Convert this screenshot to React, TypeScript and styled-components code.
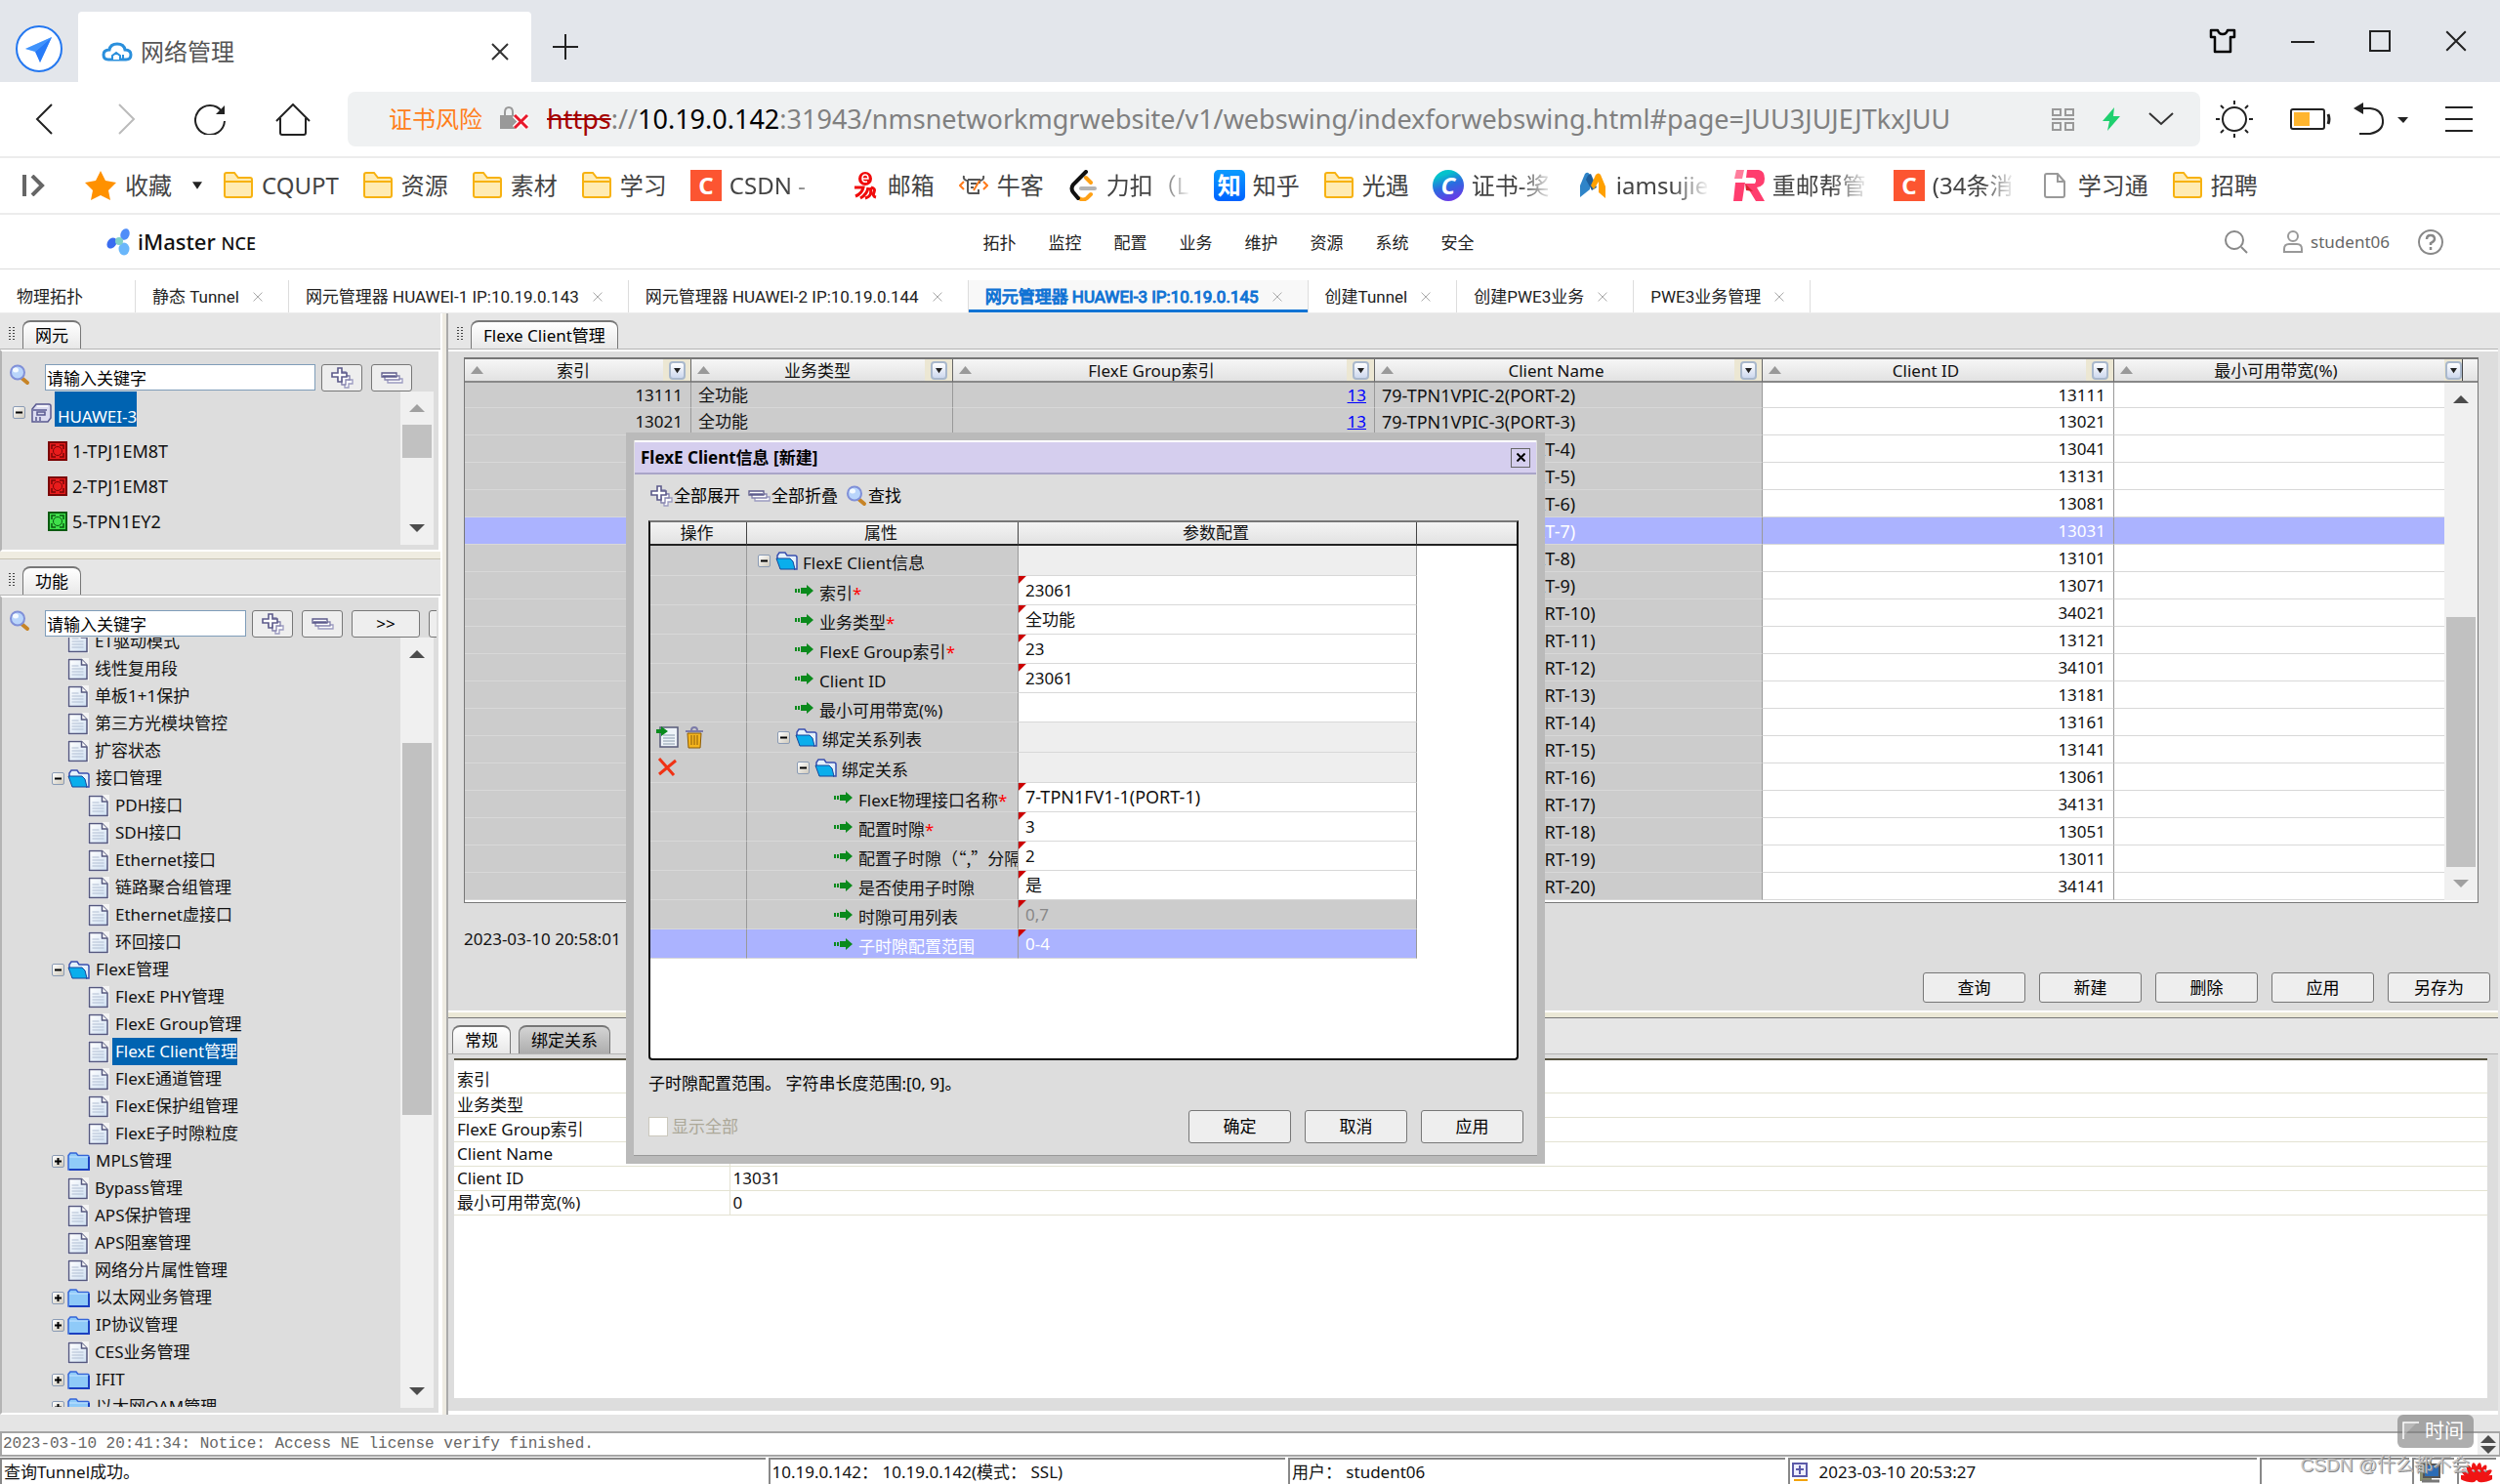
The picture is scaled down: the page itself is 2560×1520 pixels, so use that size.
import React from "react";
import styled, { createGlobalStyle, css } from "styled-components";

const Global = createGlobalStyle`
  *, *::before, *::after { box-sizing: border-box; }
  body { margin: 0; background: #fff; }
  body, button, input { font-family: "Noto Sans", "Noto Sans CJK SC", sans-serif; }
  button { padding: 0; border: 0; background: none; color: inherit; font-size: inherit; line-height: inherit; }
  svg { display: block; flex: none; }
`;

const Page = styled.div`
  position: relative;
  min-height: 100vh;
  display: flex;
  flex-direction: column;
  font-size: 17px;
  line-height: 24px;
  color: #111;
  overflow: hidden;
`;

/* ---------- browser chrome ---------- */

const TitleBar = styled.header`
  height: 84px;
  background: #e3e6eb;
  display: flex;
  align-items: stretch;
  padding: 12px 34px 0 16px;
`;
const Compass = styled.div`
  width: 64px;
  padding-top: 14px;
`;
const BrowserTab = styled.div`
  width: 464px;
  background: #fff;
  border-radius: 4px 4px 0 0;
  display: flex;
  align-items: center;
  gap: 8px;
  padding: 10px 23px 0 24px;
  font-size: 24px;
  color: #555;
`;
const Grow = styled.div`
  flex: 1;
`;
const PlainButton = styled.button`
  display: flex;
  align-items: center;
  justify-content: center;
`;
const NewTab = styled(PlainButton)`
  width: 70px;
`;
const WindowButtons = styled.div`
  display: flex;
  align-items: center;
  gap: 56px;
  height: 60px;
`;

const AddressBar = styled.div`
  height: 78px;
  border-bottom: 2px solid #ececec;
  display: flex;
  align-items: center;
  padding: 0 28px 0 2px;
`;
const NavButtons = styled.div`
  display: grid;
  grid-template-columns: repeat(4, 85px);
  width: 354px;
`;
const Omnibox = styled.div`
  flex: 1;
  min-width: 0;
  height: 56px;
  border-radius: 8px;
  background: #eff1f2;
  display: flex;
  align-items: center;
  padding: 0 27px 0 42px;
`;
const Risk = styled.span`
  font-size: 24px;
  color: #ff7e1a;
  margin-right: 18px;
`;
const Url = styled.div`
  flex: 1;
  min-width: 0;
  overflow: hidden;
  white-space: nowrap;
  font-size: 27px;
  line-height: 40px;
  color: #808080;
  margin: 0 32px 0 18px;
`;
const Scheme = styled.span`
  color: #a40000;
  text-decoration: line-through;
  text-decoration-thickness: 2px;
`;
const Host = styled.span`
  color: #000;
`;
const OmniboxTools = styled.div`
  display: flex;
  align-items: center;
  gap: 28px;
`;
const BrowserTools = styled.div`
  display: flex;
  align-items: center;
  gap: 38px;
  padding-left: 16px;
`;
const ToolPair = styled.div`
  display: flex;
  align-items: center;
  gap: 23px;
`;

const Bookmarks = styled.nav`
  height: 58px;
  border-bottom: 2px solid #ececec;
  display: flex;
  align-items: center;
  gap: 24px;
  padding-left: 22px;
  font-size: 24px;
  line-height: 32px;
  color: #444;
  white-space: nowrap;
`;
const BookmarkLead = styled.div`
  display: flex;
  align-items: center;
  width: 182px;
`;
const Rule = styled.i`
  width: 1px;
  height: 20px;
  background: #ccc;
  margin: 0 21px 0 19px;
`;
const LeadText = styled.span`
  margin: 0 21px 0 9px;
`;
const Bookmark = styled.a<{ $clip?: number }>`
  display: flex;
  align-items: center;
  gap: 8px;
  color: inherit;
  text-decoration: none;
  > span {
    ${(p) =>
      p.$clip
        ? css`
            width: ${p.$clip}px;
            mask-image: linear-gradient(to right, #000 60%, transparent 100%);
          `
        : css`
            min-width: 48px;
          `}
  }
`;
const IconSlot = styled.i`
  width: 32px;
  height: 32px;
  display: flex;
  align-items: center;
  justify-content: center;
  font-style: normal;
`;
const Tile = styled(IconSlot)<{ $bg: string; $r: number }>`
  background: ${(p) => p.$bg};
  border-radius: ${(p) => p.$r}px;
  color: #fff;
  font-weight: 700;
  font-size: 24px;
`;

/* ---------- product header ---------- */

const ProductBar = styled.header`
  height: 56px;
  border-bottom: 1px solid #ddd;
  display: grid;
  grid-template-columns: 40% auto 1fr;
  align-items: center;
  padding-right: 46px;
  color: #222;
`;
const Brand = styled.div`
  display: flex;
  align-items: center;
  gap: 7px;
  padding-left: 109px;
  font-size: 22px;
  font-weight: 500;
  color: #111;
`;
const BrandSmall = styled.span`
  font-size: 18px;
`;
const Menu = styled.nav`
  display: flex;
  gap: 33px;
  padding: 2px 0 0 1px;
`;
const MenuLink = styled.a`
  color: inherit;
  text-decoration: none;
`;
const Account = styled.div`
  display: flex;
  align-items: center;
  justify-content: flex-end;
  padding-right: 12px;
  color: #666;
`;
const UserName = styled.span`
  margin: 0 29px 0 8px;
`;
const UserIconWrap = styled.span`
  margin-left: 36px;
`;

const PageTabs = styled.div`
  height: 45px;
  padding-top: 11px;
  display: flex;
  font-family: Roboto, "Noto Sans CJK SC", sans-serif;
  border-bottom: 1px solid #ececec;
`;
const PageTab = styled.div<{ $active?: boolean; $plain?: boolean }>`
  display: flex;
  align-items: center;
  gap: 14px;
  padding: 0 ${(p) => (p.$plain ? 53 : 26)}px 0 17px;
  border-right: 1px solid #ddd;
  white-space: nowrap;
  color: #222;
  ${(p) =>
    p.$active &&
    css`
      color: #1173d4;
      background: #f8f8f8;
      box-shadow: inset 0 -3px #1173d4;
      -webkit-text-stroke: 1px #1173d4;
    `}
`;

/* ---------- workspace ---------- */

const Workspace = styled.main`
  flex: 1;
  display: grid;
  grid-template-columns: 451px 8px minmax(0, 1fr);
  background: #e6e6e6;
  padding-right: 2px;
`;
const Column = styled.div`
  display: flex;
  flex-direction: column;
  min-width: 0;
`;
const ColumnSplit = styled.div`
  background: #eeebe2;
  border-left: 2px solid #fff;
  border-right: 2px solid #aaa;
`;
const RowSplit = styled.div`
  height: 8px;
  background: #efece1;
  border-bottom: 1px solid #c8c3b4;
`;
const Panel = styled.section<{ $fill?: boolean }>`
  display: flex;
  flex-direction: column;
  ${(p) => p.$fill && "flex: 1; min-height: 0;"}
`;
const TabStrip = styled.div<{ $left?: number }>`
  height: 37px;
  border-bottom: 1px solid #b4b4b4;
  display: flex;
  align-items: flex-end;
  gap: 8px;
  padding-left: ${(p) => p.$left ?? 8}px;
`;
const Grip = styled.i`
  width: 7px;
  height: 14px;
  margin-bottom: 9px;
  background: radial-gradient(circle, #444 1px, transparent 1px) 0 0 / 4px 3px;
`;
const SwingTab = styled.button<{ $dim?: boolean }>`
  height: 29px;
  padding: 0 12px;
  border: 1px solid #777;
  border-top-width: 2px;
  border-bottom: 0;
  border-radius: 8px 8px 0 0;
  color: #000;
  background: ${(p) => (p.$dim ? "linear-gradient(#d4d4d4, #adadad)" : "linear-gradient(#fff, #e8e8e8)")};
`;
const PanelBody = styled.div<{ $h?: number }>`
  ${(p) => (p.$h ? `height: ${p.$h}px;` : "flex: 1; min-height: 0;")}
  background: #ddd;
  border: 2px solid #fff;
  border-left-color: #b4b4b4;
  display: flex;
  flex-direction: column;
  padding: 13px 2px 5px 0;
  overflow: hidden;
`;
const SearchRow = styled.div`
  display: flex;
  align-items: flex-start;
  gap: 9px;
  height: 28px;
  padding-left: 7px;
  overflow: hidden;
`;
const Lens = styled.label`
  width: 28px;
`;
const SearchInput = styled.input`
  flex: 1;
  min-width: 0;
  height: 27px;
  padding: 0 1px;
  border: 1px solid #7f9db9;
  background: #fff;
  font-size: 17px;
  color: #000;
  margin-right: -3px;
`;
const ToolButton = styled.button<{ $w?: number }>`
  width: ${(p) => p.$w ?? 42}px;
  flex: none;
  height: 28px;
  border: 1px solid #777;
  border-radius: 3px;
  background: #eee;
  color: #000;
  display: flex;
  align-items: center;
  justify-content: center;
`;
const EndCap = styled.div<{ $w: number }>`
  flex: none;
  width: ${(p) => p.$w}px;
  overflow: hidden;
`;
const TreeArea = styled.div`
  flex: 1;
  min-height: 0;
  display: flex;
  overflow: hidden;
  padding-right: 3px;
`;
const BoardTree = styled.ul`
  flex: 1;
  margin: 0;
  padding: 0;
  list-style: none;
  font-size: 18px;
  li {
    display: flex;
    align-items: center;
    gap: 5px;
    height: 36px;
    padding-left: 47px;
  }
  li:first-child {
    gap: 6px;
    padding-left: 11px;
    height: 43px;
    font-size: 17px;
  }
`;
const RootLabel = styled.span`
  align-self: flex-start;
  height: 36px;
  padding: 15px 0 0 3px;
  line-height: 21px;
  background: #0063b1;
  color: #fff;
  margin-left: -3px;
`;
const FnViewport = styled.div`
  flex: 1;
  height: 788px;
  overflow: hidden;
`;
const FnTree = styled.ul`
  margin: -10px 0 0;
  padding: 0;
  list-style: none;
`;
const FnItem = styled.li<{ $kind: string }>`
  display: flex;
  align-items: center;
  height: 28px;
  gap: 3px;
  padding-left: ${(p) => (p.$kind === "leaf" ? 67 : p.$kind === "sub" ? 88 : 51)}px;
  white-space: nowrap;
`;
const FnLabel = styled.span<{ $on?: boolean }>`
  line-height: 28px;
  padding: 0 0 0 3px;
  ${(p) => p.$on && "background: #0063b1; color: #fff;"}
`;
const ExpandBox = styled.i`
  flex: none;
  width: 13px;
  height: 13px;
  border: 1px solid #8a9bb5;
  border-radius: 2px;
  background: linear-gradient(135deg, #fff, #cfc9bb);
  display: flex;
  align-items: center;
  justify-content: center;
`;

const Track = styled.div`
  flex: none;
  width: 34px;
  height: 100%;
  background: #f0f0f0;
  display: flex;
  flex-direction: column;
`;
const TrackEnd = styled(PlainButton)`
  flex: none;
  height: 34px;
  width: 100%;
`;
const Thumb = styled.div<{ $size: number }>`
  flex: ${(p) => p.$size};
  margin: 0 2px;
  background: #c1c1c1;
`;
const Space = styled.div<{ $size: number }>`
  flex: ${(p) => p.$size};
`;

/* ---------- main grid ---------- */

const ClientBody = styled.div`
  background: #ddd;
  border-top: 2px solid #fff;
  padding: 6px 20px 0 16px;
`;
const GridFrame = styled.div`
  border: 1px solid #777;
  border-top-width: 2px;
  background: #fff;
  padding-bottom: 2px;
`;
const ClientTable = styled.table`
  width: 100%;
  table-layout: fixed;
  border-collapse: separate;
  border-spacing: 0;
`;
const HeadCell = styled.th<{ $w?: number }>`
  ${(p) => p.$w && `width: ${p.$w}px;`}
  padding: 0;
  height: 24px;
  font-weight: 400;
  background: linear-gradient(#f6f6f6, #e2e2e2);
  border-right: 1px solid #666;
  border-bottom: 2px solid #888;
  &.open { border-right: 0; }
`;
const HeadInner = styled.div`
  display: flex;
  align-items: center;
  height: 22px;
`;
const HeadLabel = styled.span<{ $lead: number }>`
  flex: 1;
  text-align: center;
  padding: 2px ${(p) => p.$lead}px 0 0;
`;
const SortMark = styled.i`
  width: 13px;
  height: 8px;
  margin-left: 6px;
  background: #999;
  clip-path: polygon(50% 0, 100% 100%, 0 100%);
`;
const FilterCell = styled.i`
  display: flex;
  align-items: center;
  justify-content: center;
  width: 28px;
  height: 22px;
  background: #ece7d3;
`;
const LastFilter = styled(FilterCell)`
  width: 19px;
  border-right: 1px solid #444;
`;
const FilterButton = styled.button`
  width: 17px;
  height: 19px;
  border: 2px solid #a9b8cc;
  border-radius: 4px;
  background: linear-gradient(#fff, #cdd8ee);
  display: flex;
  align-items: center;
  justify-content: center;
`;
const ClientRow = styled.tr<{ $on?: boolean }>`
  height: 28px;
  &:first-child { height: 26px; }
  ${(p) => p.$on && "color: #fff;"}
  td { ${(p) => p.$on && "background: #abb3ff;"} }
`;
const Cell = styled.td<{ $ro?: boolean; $right?: boolean; $port?: boolean }>`
  padding: 0 8px 0 7px;
  line-height: 24px;
  font-size: ${(p) => (p.$port ? 18 : 17)}px;
  white-space: nowrap;
  border-right: 1px solid #999;
  border-bottom: 1px solid #d8d8d8;
  background: ${(p) => (p.$ro ? "#ccc" : "#fff")};
  text-align: ${(p) => (p.$right ? "right" : "left")};
  &.last { border-right: 0; }
`;
const TrackCell = styled.td`
  padding: 0;
  height: 1px;
`;
const GroupLink = styled.a`
  color: #00f;
`;
const Stamp = styled.div`
  padding-top: 25px;
`;
const Actions = styled.div`
  display: flex;
  justify-content: flex-end;
  gap: 14px;
  margin-right: -12px;
  padding: 22px 0 8px;
`;
const SwingButton = styled.button<{ $h?: number }>`
  width: 105px;
  height: ${(p) => p.$h ?? 31}px;
  border: 1px solid #777;
  border-radius: 3px;
  background: #eee;
  color: #000;
`;
const DetailSplit = styled.div`
  height: 8px;
  background: #ebe8d6;
  border-top: 2px solid #fff;
  border-bottom: 1px solid #777;
`;
const DetailBody = styled.div`
  flex: 1;
  background: #ddd;
  padding: 4px 11px 13px 6px;
  border-bottom: 4px solid #fff;
  display: flex;
`;
const DetailPane = styled.div`
  flex: 1;
  background: #fff;
  border-top: 2px solid #55513f;
  padding-top: 8px;
`;
const DetailTable = styled.table`
  width: 100%;
  border-collapse: collapse;
  th, td {
    padding: 0 3px;
    height: 25px;
    line-height: 24px;
    text-align: left;
    font-weight: 400;
    border-bottom: 1px solid #e3e2d2;
  }
  th { width: 282px; border-right: 1px solid #e3e2d2; }
`;

/* ---------- footer ---------- */

const Gutter = styled.div`
  height: 17px;
  background: #e5e5e5;
`;
const LogLine = styled.div`
  height: 26px;
  border: 2px solid #a5a5a5;
  border-right-width: 1px;
  background: #fff;
  display: flex;
  justify-content: space-between;
  align-items: center;
  padding: 0 0 0 1px;
  font-family: "Liberation Mono", monospace;
  font-size: 16px;
  color: #666;
`;
const Spinner = styled.div`
  width: 22px;
  height: 22px;
  background: #eee;
  display: grid;
  place-content: center;
  gap: 3px;
`;
const StatusBar = styled.footer`
  height: 28px;
  padding: 1px 4px 0 0;
  display: flex;
  gap: 3px;
`;
const StatusCell = styled.div<{ $grow: number }>`
  flex: ${(p) => p.$grow} 1 0;
  min-width: 0;
  border-top: 2px solid #888;
  border-left: 2px solid #888;
  padding-left: 2px;
  line-height: 24px;
  white-space: nowrap;
  display: flex;
  align-items: center;
  gap: 10px;
`;
const TimeBadge = styled.div`
  position: absolute;
  right: 27px;
  bottom: 37px;
  width: 78px;
  height: 34px;
  border-radius: 6px;
  background: rgba(120, 120, 120, 0.6);
  color: #fff;
  font-size: 20px;
  display: flex;
  align-items: center;
  gap: 5px;
  padding-left: 5px;
`;
const Watermark = styled.div`
  position: absolute;
  right: 12px;
  bottom: 5px;
  font-size: 19px;
  line-height: 28px;
  color: rgba(200, 200, 200, 0.95);
  text-shadow: 1px 1px #888;
  white-space: nowrap;
  font-family: "Liberation Sans", "Noto Sans CJK SC", sans-serif;
`;

/* ---------- dialog ---------- */

const Dialog = styled.section`
  position: absolute;
  left: 641px;
  top: 443px;
  width: 941px;
  background: #ddd;
  border: 8px solid #bababa;
`;
const DialogTitle = styled.div`
  height: 35px;
  display: flex;
  align-items: center;
  justify-content: space-between;
  padding: 0 6px;
  margin: 0 1px;
  border-top: 2px solid #fff;
  border-bottom: 2px solid #a9a4c8;
  background: #d5ceee;
  font-weight: 700;
  color: #000;
`;
const CloseBox = styled(PlainButton)`
  width: 20px;
  height: 20px;
  border: 1px solid #666;
`;
const DialogTools = styled.div`
  display: flex;
  align-items: center;
  gap: 8px;
  padding: 10px 0 13px 17px;
`;
const DialogTool = styled.button`
  display: flex;
  align-items: center;
  gap: 1px;
  color: #000;
`;
const PropFrame = styled.div`
  margin: 0 19px 0 15px;
  min-height: 553px;
  border: 2px solid #111;
  border-top-color: #777;
  border-radius: 0 0 4px 4px;
  background: #fff;
`;
const PropTable = styled.table`
  width: 100%;
  table-layout: fixed;
  border-collapse: separate;
  border-spacing: 0;
`;
const PropHead = styled.th<{ $w?: number }>`
  ${(p) => p.$w && `width: ${p.$w}px;`}
  height: 24px;
  padding: 0 3px 0 0;
  line-height: 22px;
  font-weight: 400;
  background: linear-gradient(#f4f4f4, #e2e2e2);
  border-right: 1px solid #444;
  border-bottom: 2px solid #222;
  &:last-child { border-right: 0; }
`;
const PropRow = styled.tr<{ $tall?: boolean; $on?: boolean }>`
  height: ${(p) => (p.$tall ? 31 : 30)}px;
  td {
    padding: 0;
    background: #ccc;
    border-right: 1px solid #999;
    border-bottom: 1px solid #d8d8d8;
  }
  td:last-child { background: #fff; border: 0; }
  ${(p) => p.$on && "color: #fff; && td:not(:last-child) { background: #abb3ff; }"}
`;
const PropName = styled.div<{ $pad: number }>`
  display: flex;
  align-items: center;
  gap: 5px;
  height: 28px;
  padding-left: ${(p) => p.$pad}px;
  overflow: hidden;
  white-space: nowrap;
  > span { padding-top: 6px; }
`;
const WideQuote = styled.span`
  font-family: "Noto Sans CJK SC", sans-serif;
`;
const Star = styled.b`
  color: #f00;
  font-weight: 400;
`;
const PropValue = styled.td<{ $bg: string }>`
  && {
    background: ${(p) => (p.$bg === "edit" ? "#fff" : p.$bg === "group" ? "#eee" : "#ccc")};
  }
`;
const ValueText = styled.div<{ $gray?: boolean; $mark?: boolean; $port?: boolean }>`
  height: 29px;
  padding-left: 7px;
  line-height: 29px;
  font-size: ${(p) => (p.$port ? 18 : 17)}px;
  ${(p) => p.$gray && "color: #888;"}
  ${(p) => p.$mark && "background: linear-gradient(135deg, #c00 5px, transparent 6px) no-repeat;"}
`;
const OpIcons = styled.div`
  display: flex;
  gap: 5px;
  padding-left: 6px;
`;
const Hint = styled.p`
  margin: 0;
  padding: 12px 15px 0;
  color: #000;
`;
const DialogFoot = styled.div`
  display: flex;
  align-items: center;
  gap: 14px;
  padding: 15px 14px 12px 15px;
  border-bottom: 1px solid #999;
`;
const ShowAll = styled.label`
  flex: 1;
  display: flex;
  align-items: center;
  gap: 4px;
  color: #aca899;
`;
const CheckBox = styled.input`
  appearance: none;
  width: 20px;
  height: 20px;
  margin: 0;
  border: 1px solid #cbc8bd;
  background: #fff;
`;

/* ---------- drawings ---------- */

const Cross = ({ s = 18, c = "#333", w = 2 }: { s?: number; c?: string; w?: number }) => (
  <svg width={s} height={s} viewBox="0 0 18 18" stroke={c} strokeWidth={(w * 18) / s}>
    <path d="M1 1L17 17M17 1L1 17" />
  </svg>
);
const FolderYellow = () => (
  <svg width="30" height="28" viewBox="0 0 30 28" fill="#ffebb3" stroke="#f7b211" strokeWidth="2">
    <path d="M1 3q0-2 2-2h8l4 5h12q2 0 2 2v16q0 2-2 2H3q-2 0-2-2z" />
    <path d="M1 10h28" />
  </svg>
);
const DocIcon = () => (
  <svg width="22" height="23" viewBox="0 0 22 23">
    <defs>
      <linearGradient id="sheet" x1="0" y1="0" x2="1" y2="1">
        <stop offset="0" stopColor="#fff" />
        <stop offset="1" stopColor="#cfe0f2" />
      </linearGradient>
    </defs>
    <rect width="22" height="23" fill="#f4f4f4" />
    <path d="M1.500 1.500h13l5.500 5.500v14.500h-18.500z" fill="url(#sheet)" stroke="#55587f" strokeWidth="1.500" />
    <path d="M14.500 1.500v5.500h5.500" fill="#fff" stroke="#55587f" strokeWidth="1.500" />
    <path d="M4.500 8h7M4.500 11h12M4.500 14h12M4.500 17h12" stroke="#b0bdd2" />
  </svg>
);
const FolderClosed = () => (
  <svg width="23" height="19" viewBox="0 0 23 19">
    <path d="M1 3.500l2-2.500h6l2 2.500h10q1 0 1 1V18H1z" fill="#8fcaf8" stroke="#3465d8" strokeWidth="1.500" />
    <path d="M2 5h19" stroke="#c5e5ff" />
    <path d="M22 5v13H2" fill="none" stroke="#1b40c0" strokeWidth="2" />
  </svg>
);
const FolderOpen = () => (
  <svg width="23" height="19" viewBox="0 0 23 19">
    <path d="M2 8V4l2-3h6l2 3h8q2 0 2 2v12h-3" fill="#e4f1fb" stroke="#3a4fae" strokeWidth="1.500" />
    <path d="M1 7h14l3 3 2 8H5z" fill="#0aaeec" stroke="#17479a" />
  </svg>
);
const Expander = ({ plus }: { plus?: boolean }) => (
  <ExpandBox>
    <svg width="9" height="9" viewBox="0 0 9 9" stroke="#000" strokeWidth="2">
      <path d={plus ? "M1 4.500h7M4.500 1v7" : "M1 4.500h7"} />
    </svg>
  </ExpandBox>
);
const PlusStack = () => (
  <svg width="23" height="22" viewBox="0 0 23 22" fill="#fff" stroke="#5c5a8a" strokeWidth="1.300">
    <path d="M14 9h4v4h4v4h-4v4h-4v-4h-3v-4h3z" stroke="#9b9ac0" />
    <path d="M11 5h4v4h4v4h-4v5h-4v-5H7V9h4z" stroke="#8583ad" />
    <path d="M7 1h4v5h5v4h-5v5H7v-5H1V6h6z" strokeWidth="1.600" />
  </svg>
);
const MinusStack = () => (
  <svg width="23" height="13" viewBox="0 0 23 13" fill="#fff" stroke="#5c5a8a" strokeWidth="1.300">
    <path d="M7 7h15v4H7z" stroke="#9b9ac0" />
    <path d="M4 4h15v4H4z" stroke="#8583ad" />
    <path d="M1 1h15v4H1z" />
    <path d="M2 4h13" stroke="#4a4880" />
  </svg>
);
const SearchGlass = () => (
  <svg width="22" height="22" viewBox="0 0 22 22">
    <path d="M13 14l6 5" stroke="#c78426" strokeWidth="4" strokeLinecap="round" />
    <circle cx="9" cy="8.500" r="7" fill="#b9d5fb" stroke="#8090d8" strokeWidth="2" />
    <ellipse cx="7" cy="6" rx="3" ry="2.500" fill="#f4faff" />
  </svg>
);
const Board = ({ c, d }: { c: string; d: string }) => (
  <svg width="20" height="20" viewBox="0 0 20 20">
    <rect x="1" y="1" width="18" height="18" fill={c} stroke={d} strokeWidth="2" />
    <path d="M4 8V4h4M12 4h4v4M16 12v4h-4M8 16H4v-4" fill="none" stroke={d} strokeWidth="1.500" />
    <circle cx="10" cy="10" r="4.500" fill={c} stroke={d} />
  </svg>
);
const Device = () => (
  <svg width="21" height="20" viewBox="0 0 21 20" stroke="#5a5a90" strokeWidth="1.500" fill="#dcdcf0">
    <path d="M1 6l4-5h13q2 0 2 2v12l-3 4H1z" />
    <path d="M2 7h14M6 9h8v3H6zM5 14v4M9 14v4" />
    <path d="M6 3h11" stroke="#fff" />
  </svg>
);
const Arrow = ({ c = "#4c4c4c", up }: { c?: string; up?: boolean }) => (
  <svg width="16" height="8" viewBox="0 0 16 8" fill={c}>
    <path d={up ? "M8 0l8 8H0z" : "M0 0h16l-8 8z"} />
  </svg>
);
const Green = () => (
  <svg width="20" height="14" viewBox="0 0 20 14" fill="#0a8a1c">
    <path d="M0 5h2v4H0zM3 5h2v4H3zM6 4h6V1l7 6-7 6v-3H6z" />
  </svg>
);
const Caret = ({ s = 7 }: { s?: number }) => (
  <svg width={s} height={s} viewBox="0 0 8 8" fill="#222">
    <path d="M0 1h8L4 7z" />
  </svg>
);

const Scroll = ({ before, size, after, upOff, downOff }: { before: number; size: number; after: number; upOff?: boolean; downOff?: boolean }) => (
  <Track>
    <TrackEnd aria-label="向上滚动"><Arrow up c={upOff ? "#a0a0a0" : undefined} /></TrackEnd>
    <Space $size={before} />
    <Thumb $size={size} />
    <Space $size={after} />
    <TrackEnd aria-label="向下滚动"><Arrow c={downOff ? "#a0a0a0" : undefined} /></TrackEnd>
  </Track>
);

/* ---------- data ---------- */

const pageTabs = [
  "物理拓扑",
  "静态 Tunnel",
  "网元管理器 HUAWEI-1 IP:10.19.0.143",
  "网元管理器 HUAWEI-2 IP:10.19.0.144",
  "网元管理器 HUAWEI-3 IP:10.19.0.145",
  "创建Tunnel",
  "创建PWE3业务",
  "PWE3业务管理",
];

const fnItems: [string, string][] = [
  ["leaf", "ET驱动模式"], ["leaf", "线性复用段"], ["leaf", "单板1+1保护"], ["leaf", "第三方光模块管控"], ["leaf", "扩容状态"],
  ["open", "接口管理"], ["sub", "PDH接口"], ["sub", "SDH接口"], ["sub", "Ethernet接口"], ["sub", "链路聚合组管理"],
  ["sub", "Ethernet虚接口"], ["sub", "环回接口"], ["open", "FlexE管理"], ["sub", "FlexE PHY管理"], ["sub", "FlexE Group管理"],
  ["sub", "FlexE Client管理"], ["sub", "FlexE通道管理"], ["sub", "FlexE保护组管理"], ["sub", "FlexE子时隙粒度"],
  ["shut", "MPLS管理"], ["leaf", "Bypass管理"], ["leaf", "APS保护管理"], ["leaf", "APS阻塞管理"], ["leaf", "网络分片属性管理"],
  ["shut", "以太网业务管理"], ["shut", "IP协议管理"], ["leaf", "CES业务管理"], ["shut", "IFIT"], ["shut", "以太网OAM管理"],
];

const clientIds = [13111, 13021, 13041, 13131, 13081, 13031, 13101, 13071, 34021, 13121, 34101, 13181, 13161, 13141, 13061, 34131, 13051, 13011, 34141];

const heads: [string, number, number][] = [
  ["索引", 232, 0], ["业务类型", 268, 0], ["FlexE Group索引", 432, 16], ["Client Name", 397, 16], ["Client ID", 360, 16],
];

const details: [string, string][] = [
  ["索引", ""], ["业务类型", ""], ["FlexE Group索引", ""], ["Client Name", ""], ["Client ID", "13031"], ["最小可用带宽(%)", "0"],
];

type Prop = { level: number; name: React.ReactNode; group?: boolean; star?: boolean; value?: string; port?: boolean; ro?: boolean; on?: boolean };
const props: Prop[] = [
  { level: 0, name: "FlexE Client信息", group: true },
  { level: 0, name: "索引", star: true, value: "23061" },
  { level: 0, name: "业务类型", star: true, value: "全功能" },
  { level: 0, name: "FlexE Group索引", star: true, value: "23" },
  { level: 0, name: "Client ID", value: "23061" },
  { level: 0, name: "最小可用带宽(%)" },
  { level: 1, name: "绑定关系列表", group: true },
  { level: 2, name: "绑定关系", group: true },
  { level: 2, name: "FlexE物理接口名称", star: true, value: "7-TPN1FV1-1(PORT-1)", port: true },
  { level: 2, name: "配置时隙", star: true, value: "3" },
  { level: 2, name: <>配置子时隙（<WideQuote>“,”</WideQuote>分隔</>, value: "2" },
  { level: 2, name: "是否使用子时隙", value: "是" },
  { level: 2, name: "时隙可用列表", value: "0,7", ro: true },
  { level: 2, name: "子时隙配置范围", value: "0-4", ro: true, on: true },
];

const folder = <IconSlot><FolderYellow /></IconSlot>;
const csdn = <Tile $bg="#fc5531" $r={0}>C</Tile>;
const bookmarks: { icon: React.ReactNode; text: string; clip?: number }[] = [
  { icon: folder, text: "CQUPT" },
  { icon: folder, text: "资源" },
  { icon: folder, text: "素材" },
  { icon: folder, text: "学习" },
  { icon: csdn, text: "CSDN -", clip: 98 },
  {
    icon: (
      <IconSlot>
        <svg width="26" height="30" viewBox="0 0 26 30" fill="none" stroke="#f00a0a" strokeWidth="3">
          <circle cx="14" cy="8" r="7" fill="#f00a0a" stroke="none" />
          <path d="M11 8h6q0-4-3-4t-3 4q0 4 5 3" stroke="#fff" strokeWidth="1.500" />
          <path d="M3 17h9q-1 6-8 9M9 28q7-4 8-11M14 28q8-2 5-11M20 17q5 1 3 5t2 5" />
        </svg>
      </IconSlot>
    ),
    text: "邮箱",
  },
  {
    icon: (
      <IconSlot>
        <svg width="30" height="22" viewBox="0 0 30 22" fill="none" stroke="#555" strokeWidth="2">
          <path d="M5 1q-1 4 3 5M25 1q1 4-3 5M9 5h12v4M9 5v12q0 2 2 2h9v-4M12 9h6M12 13h3" />
          <path d="M5 7l-4 4 4 4M25 7l4 4-4 4M21 6l-6 10" stroke="#ff7a1a" />
        </svg>
      </IconSlot>
    ),
    text: "牛客",
  },
  {
    icon: (
      <IconSlot>
        <svg width="28" height="32" viewBox="0 0 28 32" fill="none" strokeWidth="4" strokeLinecap="round">
          <path d="M22 13l-5-5M22 25l-4 4q-4 3-8 0" stroke="#ffa116" />
          <path d="M17 2L4 15q-3 4 0 8l5 6" stroke="#111" />
          <path d="M12 19h14" stroke="#b3b3b3" />
        </svg>
      </IconSlot>
    ),
    text: "力扣（L",
    clip: 86,
  },
  { icon: <Tile $bg="linear-gradient(#0a9bff, #0062ff)" $r={5}>知</Tile>, text: "知乎" },
  { icon: folder, text: "光遇" },
  { icon: <Tile $bg="linear-gradient(160deg, #04c3cc 20%, #2b6be0 50%, #7d2ae8)" $r={16}><i>C</i></Tile>, text: "证书-奖", clip: 84 },
  {
    icon: (
      <IconSlot>
        <svg width="28" height="28" viewBox="0 0 28 28">
          <path d="M1 26V14L6 2q3-3 5 1v15z" fill="#2f84c8" />
          <path d="M7 8q2-6 5-6l6 14-5 3z" fill="#1d5e9c" />
          <path d="M12 14l5-11q3-3 5 0l5 12v12l-7-6V10l-5 8z" fill="#ffa000" />
        </svg>
      </IconSlot>
    ),
    text: "iamsujie",
    clip: 96,
  },
  {
    icon: (
      <IconSlot>
        <svg width="32" height="32" viewBox="0 0 32 32" fill="#ff3d6e">
          <path d="M3 0h8L9 9H1z" fill="#ff7d9c" />
          <path d="M14 0h12q6 1 6 9t-8 9l8 14h-9L12 14h10q3-5-2-6h-7z" />
          <path d="M2 13h10L9 32H0z" />
          <path d="M12 14l8 8-7-1z" fill="#d8232f" />
        </svg>
      </IconSlot>
    ),
    text: "重邮帮管",
    clip: 100,
  },
  { icon: csdn, text: "(34条消", clip: 85 },
  {
    icon: (
      <IconSlot>
        <svg width="22" height="26" viewBox="0 0 22 26" fill="none" stroke="#999" strokeWidth="2">
          <path d="M3 1h11l7 8v14q0 2-2 2H3q-2 0-2-2V3q0-2 2-2zM14 1v8h7" />
        </svg>
      </IconSlot>
    ),
    text: "学习通",
  },
  { icon: folder, text: "招聘" },
];

const propPad = (p: Prop) => 11 + p.level * 20 + (p.group ? 0 : 38);

export default function App() {
  return (
    <Page>
      <Global />
      <TitleBar>
        <Compass>
          <svg width="48" height="48" viewBox="0 0 48 48">
            <circle cx="24" cy="24" r="23" fill="#fff" stroke="#2377f0" strokeWidth="2" />
            <path d="M37 12L10 24l10 3z" fill="#5aa7ff" />
            <path d="M37 12L20 27l5 11z" fill="#1c6df5" />
            <path d="M37 12L10 24l11 3 4 11z" fill="#2f86fa" fillOpacity=".6" />
          </svg>
        </Compass>
        <BrowserTab>
          <svg width="32" height="20" viewBox="0 0 32 20" fill="#fff" stroke="#2a8fdc" strokeWidth="3">
            <path d="M7 18q-5 0-5-5t6-5q1-6 8-6t8 6q6 0 6 5t-5 5z" />
            <path d="M11 18v-4l4-3 4 3v4M22 18v-5" strokeWidth="2" />
          </svg>
          <span>网络管理</span>
          <Grow />
          <PlainButton aria-label="关闭标签页"><Cross s={18} /></PlainButton>
        </BrowserTab>
        <NewTab aria-label="新标签页">
          <svg width="26" height="26" viewBox="0 0 26 26" stroke="#222" strokeWidth="2"><path d="M13 0v26M0 13h26" /></svg>
        </NewTab>
        <Grow />
        <WindowButtons>
          <PlainButton aria-label="皮肤">
            <svg width="28" height="26" viewBox="0 0 28 26" fill="none" stroke="#000" strokeWidth="2.500">
              <path d="M2 2h7q1 4 5 4t5-4h7v7h-4v15H6V9H2z" strokeLinejoin="round" />
            </svg>
          </PlainButton>
          <PlainButton aria-label="最小化"><svg width="24" height="24" stroke="#222" strokeWidth="2"><path d="M0 13h24" /></svg></PlainButton>
          <PlainButton aria-label="最大化"><svg width="22" height="22" fill="none" stroke="#222" strokeWidth="2"><path d="M1 1h20v20H1z" /></svg></PlainButton>
          <PlainButton aria-label="关闭"><Cross s={22} c="#222" /></PlainButton>
        </WindowButtons>
      </TitleBar>

      <AddressBar>
        <NavButtons>
          <PlainButton aria-label="后退"><svg width="20" height="32" fill="none" stroke="#222" strokeWidth="2"><path d="M18 1L3 16l15 15" /></svg></PlainButton>
          <PlainButton aria-label="前进"><svg width="20" height="32" fill="none" stroke="#bbb" strokeWidth="2"><path d="M2 1l15 15L2 31" /></svg></PlainButton>
          <PlainButton aria-label="刷新">
            <svg width="32" height="32" viewBox="0 0 32 32" fill="none" stroke="#222" strokeWidth="2">
              <path d="M28 8A15 15 0 1 0 31 18" /><path d="M31 2v9h-9z" fill="#222" stroke="none" />
            </svg>
          </PlainButton>
          <PlainButton aria-label="主页">
            <svg width="36" height="33" viewBox="0 0 36 33" fill="none" stroke="#222" strokeWidth="2">
              <path d="M1 18L18 1l17 17M5 15v15q0 2 2 2h22q2 0 2-2V15" />
            </svg>
          </PlainButton>
        </NavButtons>
        <Omnibox>
          <Risk>证书风险</Risk>
          <svg width="30" height="26" viewBox="0 0 30 26">
            <path d="M5 10V6q0-5 4-5t4 5v4" fill="none" stroke="#999" strokeWidth="2" />
            <path d="M0 9h18v14H0z" fill="#999" />
            <path d="M15 9l13 13M28 9L15 22" stroke="#fff" strokeWidth="6" />
            <path d="M15 9l13 13M28 9L15 22" stroke="#e8192c" strokeWidth="3" />
          </svg>
          <Url><Scheme>https</Scheme>://<Host>10.19.0.142</Host>:31943/nmsnetworkmgrwebsite/v1/webswing/indexforwebswing.html#page=JUU3JUJEJTkxJUU</Url>
          <OmniboxTools>
            <svg width="23" height="23" viewBox="0 0 23 23" fill="none" stroke="#999" strokeWidth="2">
              <path d="M1 1h8v6H1zM14 1h8v6h-8zM1 15h8v7H1zM14 15h8v7h-8zM0 11h23" />
            </svg>
            <svg width="20" height="24" viewBox="0 0 20 24" fill="#1fd06f"><path d="M13 0L1 14h7L6 24l13-15h-7z" /></svg>
            <svg width="26" height="14" viewBox="0 0 26 14" fill="none" stroke="#333" strokeWidth="2"><path d="M1 1l12 11L25 1" /></svg>
          </OmniboxTools>
        </Omnibox>
        <BrowserTools>
          <svg width="38" height="38" viewBox="0 0 38 38" fill="none" stroke="#222" strokeWidth="2">
            <circle cx="19" cy="19" r="12" />
            <path d="M19 0v4M19 34v4M0 19h4M34 19h4M5 5l3 3M30 30l3 3M33 5l-3 3M8 30l-3 3" />
          </svg>
          <ToolPair>
            <svg width="42" height="22" viewBox="0 0 42 22" fill="none" stroke="#222" strokeWidth="2">
              <rect x="1" y="1" width="34" height="20" rx="2" /><path d="M4 4h16v14H4z" fill="#ffb52e" stroke="none" /><path d="M39 6q2 5 0 10" strokeWidth="3" />
            </svg>
            <svg width="56" height="34" viewBox="0 0 56 34" fill="none" stroke="#222" strokeWidth="2">
              <path d="M5 6h12q12 1 13 12t-13 14H6" /><path d="M0 6l10-6v12z" fill="#222" stroke="none" /><path d="M45 15h11l-5 6z" fill="#222" stroke="none" />
            </svg>
          </ToolPair>
          <svg width="28" height="28" viewBox="0 0 28 28" stroke="#222" strokeWidth="2"><path d="M0 2h28M0 14h28M0 26h28" /></svg>
        </BrowserTools>
      </AddressBar>

      <Bookmarks>
        <BookmarkLead>
          <svg width="25" height="22" viewBox="0 0 25 22" fill="none" stroke="#666" strokeWidth="4"><path d="M3 0v22M11 1l10 10-10 10" /></svg>
          <Rule />
          <svg width="32" height="30" viewBox="0 0 32 30" fill="#ff9100"><path d="M16 0l5 10 11 2-8 8 2 10-10-5-10 5 2-10-8-8 11-2z" /></svg>
          <LeadText>收藏</LeadText>
          <Caret s={10} />
        </BookmarkLead>
        {bookmarks.map((b, i) => (
          <Bookmark key={i} href="#" $clip={b.clip}>
            {b.icon}
            <span>{b.text}</span>
          </Bookmark>
        ))}
      </Bookmarks>

      <ProductBar>
        <Brand>
          <svg width="25" height="28" viewBox="0 0 25 28">
            <ellipse cx="19" cy="6" rx="4.500" ry="6" fill="#4f8df8" transform="rotate(20 19 6)" />
            <ellipse cx="5.500" cy="15" rx="4.500" ry="6" fill="#3a6df0" transform="rotate(35 5.500 15)" />
            <ellipse cx="18" cy="21" rx="5.500" ry="6.500" fill="#6ab7fb" />
            <circle cx="13" cy="13" r="4" fill="#7fd0c8" />
          </svg>
          <span>iMaster <BrandSmall>NCE</BrandSmall></span>
        </Brand>
        <Menu>
          {["拓扑", "监控", "配置", "业务", "维护", "资源", "系统", "安全"].map((m) => (
            <MenuLink key={m} href="#">{m}</MenuLink>
          ))}
        </Menu>
        <Account>
          <svg width="24" height="24" viewBox="0 0 24 24" fill="none" stroke="#888" strokeWidth="2"><circle cx="10" cy="10" r="9" /><path d="M17 17l6 6" /></svg>
          <UserIconWrap>
            <svg width="20" height="24" viewBox="0 0 20 24" fill="none" stroke="#999" strokeWidth="2">
              <circle cx="10" cy="6" r="5" /><path d="M1 22v-3q0-5 5-5h8q5 0 5 5v3z" />
            </svg>
          </UserIconWrap>
          <UserName>student06</UserName>
          <svg width="26" height="26" viewBox="0 0 26 26" fill="none" stroke="#888" strokeWidth="2">
            <circle cx="13" cy="13" r="12" /><path d="M9 10q0-4 4-4t4 4q0 2-4 4v2" strokeWidth="2.500" /><path d="M13 18v3" strokeWidth="2.500" />
          </svg>
        </Account>
      </ProductBar>

      <PageTabs>
        {pageTabs.map((t, i) => (
          <PageTab key={t} $active={i === 4} $plain={i === 0}>
            <span>{t}</span>
            {i > 0 && <PlainButton aria-label={`关闭 ${t}`}><Cross s={10} c="#aaa" w={1} /></PlainButton>}
          </PageTab>
        ))}
      </PageTabs>

      <Workspace>
        <Column>
          <Panel>
            <TabStrip>
              <Grip />
              <SwingTab>网元</SwingTab>
            </TabStrip>
            <PanelBody $h={207}>
              <SearchRow>
                <Lens htmlFor="ne-search" aria-label="查找网元"><SearchGlass /></Lens>
                <SearchInput id="ne-search" defaultValue="请输入关键字" />
                <ToolButton aria-label="全部展开"><PlusStack /></ToolButton>
                <ToolButton aria-label="全部折叠"><MinusStack /></ToolButton>
                <EndCap $w={16} />
              </SearchRow>
              <TreeArea>
                <BoardTree>
                  <li><Expander /><Device /><RootLabel>HUAWEI-3</RootLabel></li>
                  <li><Board c="#e81c1c" d="#7a0606" />1-TPJ1EM8T</li>
                  <li><Board c="#e81c1c" d="#7a0606" />2-TPJ1EM8T</li>
                  <li><Board c="#3fe04a" d="#0a5a10" />5-TPN1EY2</li>
                </BoardTree>
                <Scroll before={0} size={34} after={55} upOff />
              </TreeArea>
            </PanelBody>
          </Panel>
          <RowSplit />
          <Panel $fill>
            <TabStrip>
              <Grip />
              <SwingTab>功能</SwingTab>
            </TabStrip>
            <PanelBody>
              <SearchRow>
                <Lens htmlFor="fn-search" aria-label="查找功能"><SearchGlass /></Lens>
                <SearchInput id="fn-search" defaultValue="请输入关键字" />
                <ToolButton aria-label="全部展开"><PlusStack /></ToolButton>
                <ToolButton aria-label="全部折叠"><MinusStack /></ToolButton>
                <ToolButton $w={70}>&gt;&gt;</ToolButton>
                <EndCap $w={8}><ToolButton aria-label="更多" /></EndCap>
              </SearchRow>
              <TreeArea>
                <FnViewport>
                  <FnTree>
                    {fnItems.map(([kind, name]) => (
                      <FnItem key={name} $kind={kind}>
                        {(kind === "open" || kind === "shut") && <Expander plus={kind === "shut"} />}
                        {kind === "open" ? <FolderOpen /> : kind === "shut" ? <FolderClosed /> : <DocIcon />}
                        <FnLabel $on={name === "FlexE Client管理"}>{name}</FnLabel>
                      </FnItem>
                    ))}
                  </FnTree>
                </FnViewport>
                <Scroll before={74} size={380} after={266} />
              </TreeArea>
            </PanelBody>
          </Panel>
        </Column>
        <ColumnSplit />
        <Column>
          <TabStrip>
            <Grip />
            <SwingTab>Flexe Client管理</SwingTab>
          </TabStrip>
          <ClientBody>
            <GridFrame>
              <ClientTable>
                <thead>
                  <tr>
                    {heads.map(([h, w, lead]) => (
                      <HeadCell key={h} $w={w}>
                        <HeadInner>
                          <SortMark />
                          <HeadLabel $lead={lead}>{h}</HeadLabel>
                          <FilterCell><FilterButton aria-label={`筛选${h}`}><Caret /></FilterButton></FilterCell>
                        </HeadInner>
                      </HeadCell>
                    ))}
                    <HeadCell className="open"><HeadInner><SortMark /><HeadLabel $lead={26}>最小可用带宽(%)</HeadLabel></HeadInner></HeadCell>
                    <HeadCell className="open" $w={34}>
                      <LastFilter><FilterButton aria-label="筛选最小可用带宽"><Caret /></FilterButton></LastFilter>
                    </HeadCell>
                  </tr>
                </thead>
                <tbody>
                  {clientIds.map((id, i) => (
                    <ClientRow key={id} $on={i === 5}>
                      <Cell $ro $right>{i < 2 && id}</Cell>
                      <Cell $ro>{i < 2 && "全功能"}</Cell>
                      <Cell $ro $right>{i < 2 && <GroupLink href="#">13</GroupLink>}</Cell>
                      <Cell $ro $port>{`79-TPN1VPIC-${i + 2}(PORT-${i + 2})`}</Cell>
                      <Cell $right>{id}</Cell>
                      <Cell className="last" />
                      {i === 0 && <TrackCell rowSpan={clientIds.length}><Scroll before={206} size={256} after={0} downOff /></TrackCell>}
                    </ClientRow>
                  ))}
                </tbody>
              </ClientTable>
            </GridFrame>
            <Stamp>2023-03-10 20:58:01</Stamp>
            <Actions>
              {["查询", "新建", "删除", "应用", "另存为"].map((b) => <SwingButton key={b}>{b}</SwingButton>)}
            </Actions>
          </ClientBody>
          <DetailSplit />
          <TabStrip $left={4}>
            <SwingTab>常规</SwingTab>
            <SwingTab $dim>绑定关系</SwingTab>
          </TabStrip>
          <DetailBody>
            <DetailPane>
              <DetailTable>
                <tbody>
                  {details.map(([k, v]) => <tr key={k}><th scope="row">{k}</th><td>{v}</td></tr>)}
                </tbody>
              </DetailTable>
            </DetailPane>
          </DetailBody>
        </Column>
      </Workspace>

      <Gutter />
      <LogLine>
        <span>2023-03-10 20:41:34: Notice: Access NE license verify finished.</span>
        <Spinner><Arrow up /><Arrow /></Spinner>
      </LogLine>
      <StatusBar>
        <StatusCell $grow={788}>查询Tunnel成功。</StatusCell>
        <StatusCell $grow={531}>10.19.0.142： 10.19.0.142(模式： SSL)</StatusCell>
        <StatusCell $grow={510}>用户： student06</StatusCell>
        <StatusCell $grow={482}>
          <svg width="18" height="20" viewBox="0 0 18 20">
            <path d="M1 1h14v13H1z" fill="#eef" stroke="#5c5aa8" strokeWidth="2" />
            <path d="M8 3v9M4 7h8" stroke="#5c5aa8" strokeWidth="2" />
            <path d="M2 18h14" stroke="#f2a20c" strokeWidth="2" />
          </svg>
          2023-03-10 20:53:27
        </StatusCell>
        <StatusCell $grow={150} />
        <StatusCell $grow={40}>
          <svg width="26" height="24" viewBox="0 0 26 24">
            <path d="M4 1h12v20H4z" fill="#8a8f70" />
            <path d="M8 4h16v13H8z" fill="#2b6cb5" stroke="#555" strokeWidth="2" />
            <path d="M6 21h18" stroke="#777" strokeWidth="3" />
          </svg>
        </StatusCell>
        <StatusCell $grow={36}>
          <svg width="32" height="24" viewBox="0 0 32 24" fill="#f01414">
            {[-76, -54, -31, -10, 10, 31, 54, 76].map((a) => (
              <ellipse key={a} cx="16" cy="11" rx="3" ry="9" transform={`rotate(${a} 16 21)`} />
            ))}
          </svg>
        </StatusCell>
      </StatusBar>

      <Dialog role="dialog" aria-label="FlexE Client信息">
        <DialogTitle>
          <span>FlexE Client信息 [新建]</span>
          <CloseBox aria-label="关闭对话框"><Cross s={9} c="#000" w={2} /></CloseBox>
        </DialogTitle>
        <DialogTools>
          <DialogTool><PlusStack />全部展开</DialogTool>
          <DialogTool><MinusStack />全部折叠</DialogTool>
          <DialogTool><SearchGlass />查找</DialogTool>
        </DialogTools>
        <PropFrame>
          <PropTable>
            <thead>
              <tr>
                <PropHead $w={99}>操作</PropHead>
                <PropHead $w={278}>属性</PropHead>
                <PropHead $w={408}>参数配置</PropHead>
                <PropHead />
              </tr>
            </thead>
            <tbody>
              {props.map((p, i) => (
                <PropRow key={i} $tall={p.group} $on={p.on}>
                  <td>
                    {p.level === 1 && (
                      <OpIcons>
                        <svg width="24" height="23" viewBox="0 0 24 23">
                          <path d="M4 1h18v20H4z" fill="#eef3f8" stroke="#555a78" strokeWidth="1.500" />
                          <path d="M7 9h12M7 12h12M7 15h12M7 18h12" stroke="#8899aa" />
                          <path d="M0 3h5V0l7 5-7 5V7H0z" fill="#0a8a1c" />
                        </svg>
                        <svg width="20" height="23" viewBox="0 0 20 23">
                          <path d="M3 7h14l-1 15H4z" fill="#f5b51e" stroke="#8a5a08" />
                          <path d="M7 9v10M10 9v10M13 9v10" stroke="#8a5a08" />
                          <path d="M1 5h18M7 4q0-3 3-3t3 3" stroke="#7b7aa8" strokeWidth="2" fill="none" />
                        </svg>
                      </OpIcons>
                    )}
                    {p.level === 2 && p.group && (
                      <OpIcons>
                        <svg width="22" height="20" viewBox="0 0 22 20" stroke="#f03214" strokeWidth="3"><path d="M3 1l15 17M20 3L3 17" /></svg>
                      </OpIcons>
                    )}
                  </td>
                  <td>
                    <PropName $pad={propPad(p)}>
                      {p.group ? <><Expander /><FolderOpen /></> : <Green />}
                      <span>{p.name}{p.star && <Star>*</Star>}</span>
                    </PropName>
                  </td>
                  <PropValue $bg={p.group ? "group" : p.ro ? "ro" : "edit"}>
                    <ValueText $gray={p.ro && !p.on} $mark={!!p.value} $port={p.port}>{p.value}</ValueText>
                  </PropValue>
                  <td />
                </PropRow>
              ))}
            </tbody>
          </PropTable>
        </PropFrame>
        <Hint>子时隙配置范围。 字符串长度范围:[0, 9]。</Hint>
        <DialogFoot>
          <ShowAll><CheckBox type="checkbox" disabled />显示全部</ShowAll>
          {["确定", "取消", "应用"].map((b) => <SwingButton key={b} $h={34}>{b}</SwingButton>)}
        </DialogFoot>
      </Dialog>

      <TimeBadge>
        <svg width="18" height="20" viewBox="0 0 18 20" fill="none" stroke="#fff" strokeWidth="1.500"><path d="M1 18V1h16" /><path d="M2 2h12L2 14z" fill="#ccc" fillOpacity=".5" stroke="none" /></svg>
        时间
      </TimeBadge>
      <Watermark>CSDN @什么都不会…</Watermark>
    </Page>
  );
}
